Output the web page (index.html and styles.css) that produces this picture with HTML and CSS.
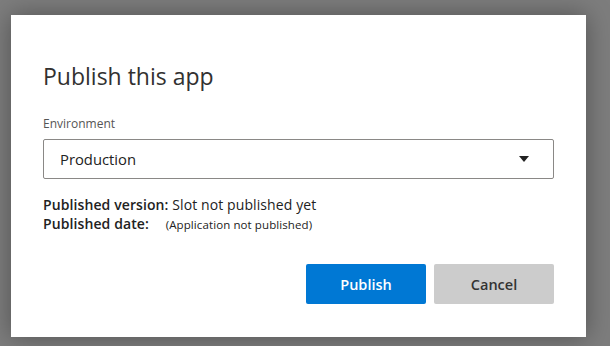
FILE: index.html
```html
<!DOCTYPE html>
<html lang="en">
<head>
    <meta charset="UTF-8">
    <title>Publish this app</title>
    <link rel="stylesheet" href="styles.css">
</head>
<body>
    <div class="dialog">
        <h1 class="title">Publish this app</h1>

        <div class="field">
            <div class="label">Environment</div>
            <div class="select">
                <span>Production</span>
                <svg class="caret" width="10" height="6" viewBox="0 0 10 6"><path d="M0 0h10L5 6z" fill="#222"/></svg>
            </div>
        </div>

        <div class="info">
            <div><b>Published version:</b> Slot not published yet</div>
            <div><b>Published date:</b> <span class="small">(Application not published)</span></div>
        </div>

        <div class="actions">
            <button class="btn primary">Publish</button>
            <button class="btn">Cancel</button>
        </div>
    </div>
</body>
</html>
```

FILE: styles.css
```css
body {
    margin: 0;
    height: 346px;
    background: #7d7d7d;
    font-family: "Open Sans", "Noto Sans", sans-serif;
    color: #222;
    overflow: hidden;
}
.dialog {
    margin: 15px 0 0 11px;
    width: 575px;
    height: 322px;
    box-sizing: border-box;
    padding: 46px 32px 0 32px;
    background: #fff;
    box-shadow: 0 0 24px rgba(0, 0, 0, 0.35);
}
.title {
    margin: 0;
    font-size: 23px;
    font-weight: 400;
    line-height: 30px;
    color: #323130;
}
.field {
    margin-top: 25px;
}
.label {
    font-size: 12px;
    line-height: 16px;
    color: #555;
}
.select {
    margin-top: 7px;
    width: 511px;
    height: 40px;
    box-sizing: border-box;
    border: 1px solid #8a8886;
    border-radius: 2px;
    display: flex;
    align-items: center;
    justify-content: space-between;
    padding: 0 24px 0 16px;
    font-size: 14.8px;
}
.info {
    margin-top: 16px;
    font-size: 14px;
    line-height: 19px;
    letter-spacing: 0.1px;
}
.info b {
    font-weight: 600;
}
.info .small {
    font-size: 11.5px;
    margin-left: 13px;
}
.actions {
    margin-top: 30px;
    display: flex;
    justify-content: flex-end;
    gap: 8px;
    width: 511px;
}
.btn {
    width: 120px;
    height: 40px;
    border: none;
    border-radius: 2px;
    background: #cccccc;
    color: #333;
    font-family: inherit;
    font-size: 14.5px;
    font-weight: 600;
}
.btn.primary {
    background: #0078d4;
    color: #fff;
}
```
